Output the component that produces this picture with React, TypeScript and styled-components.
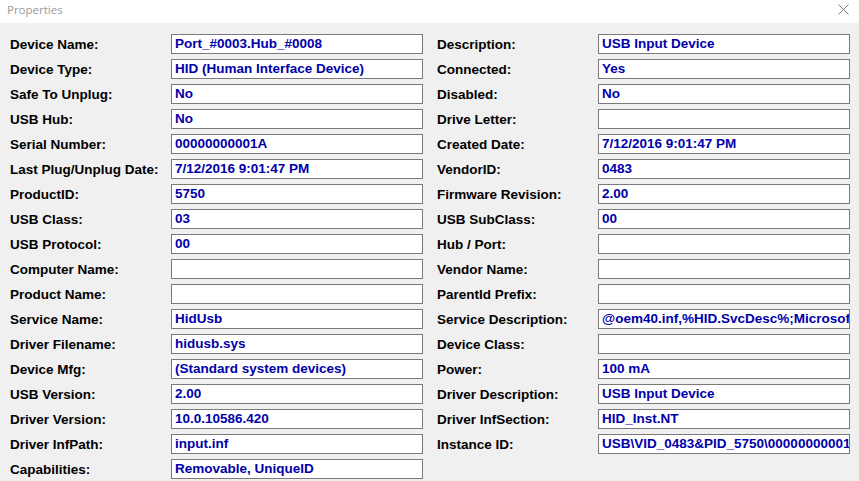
import React from 'react'
import styled, { createGlobalStyle } from 'styled-components'

const GlobalStyle = createGlobalStyle`
  html, body {
    margin: 0;
    padding: 0;
    background: #f0f0f0;
  }
  body {
    width: 859px;
    height: 481px;
    overflow: hidden;
  }
`

type Field = { label: string; value: string }

const leftFields: Field[] = [
  { label: 'Device Name:', value: 'Port_#0003.Hub_#0008' },
  { label: 'Device Type:', value: 'HID (Human Interface Device)' },
  { label: 'Safe To Unplug:', value: 'No' },
  { label: 'USB Hub:', value: 'No' },
  { label: 'Serial Number:', value: '00000000001A' },
  { label: 'Last Plug/Unplug Date:', value: '7/12/2016 9:01:47 PM' },
  { label: 'ProductID:', value: '5750' },
  { label: 'USB Class:', value: '03' },
  { label: 'USB Protocol:', value: '00' },
  { label: 'Computer Name:', value: '' },
  { label: 'Product Name:', value: '' },
  { label: 'Service Name:', value: 'HidUsb' },
  { label: 'Driver Filename:', value: 'hidusb.sys' },
  { label: 'Device Mfg:', value: '(Standard system devices)' },
  { label: 'USB Version:', value: '2.00' },
  { label: 'Driver Version:', value: '10.0.10586.420' },
  { label: 'Driver InfPath:', value: 'input.inf' },
  { label: 'Capabilities:', value: 'Removable, UniqueID' },
]

const rightFields: Field[] = [
  { label: 'Description:', value: 'USB Input Device' },
  { label: 'Connected:', value: 'Yes' },
  { label: 'Disabled:', value: 'No' },
  { label: 'Drive Letter:', value: '' },
  { label: 'Created Date:', value: '7/12/2016 9:01:47 PM' },
  { label: 'VendorID:', value: '0483' },
  { label: 'Firmware Revision:', value: '2.00' },
  { label: 'USB SubClass:', value: '00' },
  { label: 'Hub / Port:', value: '' },
  { label: 'Vendor Name:', value: '' },
  { label: 'ParentId Prefix:', value: '' },
  // long values are clipped by the read-only box, as in the original dialog
  { label: 'Service Description:', value: '@oem40.inf,%HID.SvcDesc%;Microsoft Input Configuration Device' },
  { label: 'Device Class:', value: '' },
  { label: 'Power:', value: '100 mA' },
  { label: 'Driver Description:', value: 'USB Input Device' },
  { label: 'Driver InfSection:', value: 'HID_Inst.NT' },
  { label: 'Instance ID:', value: 'USB\\VID_0483&PID_5750\\00000000001A' },
]

const CloseIcon = () => (
  <svg width="11" height="11" viewBox="0 0 11 11">
    <path d="M0.5 0.5 L10.5 10.5 M10.5 0.5 L0.5 10.5" stroke="#7a7a7a" strokeWidth="1" fill="none" />
  </svg>
)

const FieldColumn = ({ fields }: { fields: Field[] }) => (
  <Column>
    {fields.map((f) => (
      <Row key={f.label}>
        <Label>{f.label}</Label>
        <ValueBox>{f.value}</ValueBox>
      </Row>
    ))}
  </Column>
)

const App = () => {
  return (
    <>
      <GlobalStyle />
      <Window>
        <TitleBar>
          <Title>Properties</Title>
          <CloseButton>
            <CloseIcon />
          </CloseButton>
        </TitleBar>
        <Body>
          <FieldColumn fields={leftFields} />
          <FieldColumn fields={rightFields} />
        </Body>
      </Window>
    </>
  )
}

export default App

const Window = styled.div`
  width: 859px;
  height: 481px;
  background: #f0f0f0;
  display: flex;
  flex-direction: column;
  overflow: hidden;
`

const TitleBar = styled.div`
  height: 23px;
  background: #ffffff;
  display: flex;
  align-items: center;
  justify-content: space-between;
  padding: 0 10px 0 7px;
  box-sizing: border-box;
`

const Title = styled.span`
  font-family: 'Open Sans', 'Noto Sans', sans-serif;
  font-size: 11.5px;
  color: #9a9a9a;
  margin-top: -4px;
`

const CloseButton = styled.div`
  display: flex;
  align-items: center;
  margin-top: -5px;
`

const Body = styled.div`
  display: flex;
  gap: 14px;
  padding: 11px 0 0 10px;
`

const Column = styled.div`
  display: flex;
  flex-direction: column;
  gap: 5px;
`

const Row = styled.div`
  display: flex;
  align-items: center;
  height: 20px;
`

const Label = styled.div`
  width: 161px;
  font-family: 'Liberation Sans', Arial, sans-serif;
  font-weight: bold;
  font-size: 13.5px;
  color: #000;
  white-space: nowrap;
`

const ValueBox = styled.div`
  width: 252px;
  height: 20px;
  box-sizing: border-box;
  border: 1px solid #7a7a7a;
  background: #fff;
  padding: 0 3px;
  font-family: 'Liberation Sans', Arial, sans-serif;
  font-weight: bold;
  font-size: 13.5px;
  line-height: 18px;
  color: #0000aa;
  white-space: nowrap;
  overflow: hidden;
`
